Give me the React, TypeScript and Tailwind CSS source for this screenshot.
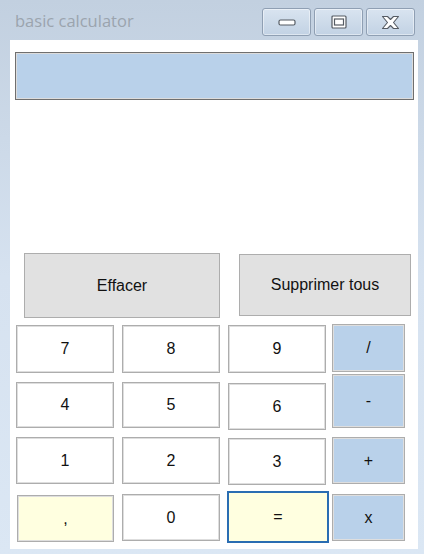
import React from "react";

type Key = { label: string; cls: string };

const base =
  "flex items-center justify-center border border-[#adadad] shadow-[inset_0_0_0_1px_#dedede] text-[16px] text-[#111]";

function CalcButton({ label, cls }: Key) {
  return <div className={`${base} ${cls}`}>{label}</div>;
}

function TitleButton({ children }: { children: React.ReactNode }) {
  return (
    <div className="flex h-[28px] w-[49px] items-center justify-center rounded-[3px] border border-[#8f9fb3] bg-gradient-to-b from-[#d9e4f0] to-[#c2d2e4] shadow-[inset_0_0_0_1px_rgba(255,255,255,0.45)]">
      {children}
    </div>
  );
}

export default function App() {
  return (
    <div
      className="flex h-[554px] w-[424px] flex-col bg-gradient-to-b from-[#c2d0e0] via-[#d6e2f0] to-[#dbe7f4]"
      style={{ fontFamily: '"Liberation Sans", Arial, sans-serif' }}
    >
      {/* Barre de titre */}
      <div className="flex h-[40px] shrink-0 items-start">
        <span
          className="ml-[15px] mt-[9px] text-[16.5px] leading-[24px] text-[#9ba4ae]"
          style={{ fontFamily: '"Open Sans", "Noto Sans", sans-serif' }}
        >
          basic calculator
        </span>
        <div className="ml-auto mr-[9px] mt-[8px] flex gap-[3px]">
          <TitleButton>
            <svg width="18" height="7" viewBox="0 0 18 7">
              <rect x="1" y="1" width="16" height="5" rx="1.5" fill="#fff" stroke="#555b63" strokeWidth="1.2" />
            </svg>
          </TitleButton>
          <TitleButton>
            <svg width="16" height="14" viewBox="0 0 16 14">
              <rect x="1" y="1" width="14" height="12" rx="1" fill="#fff" stroke="#555b63" strokeWidth="1.2" />
              <rect x="3.5" y="4" width="9" height="6" fill="#fff" stroke="#555b63" strokeWidth="1.2" />
            </svg>
          </TitleButton>
          <TitleButton>
            <svg width="19" height="15" viewBox="0 0 19 15">
              <path
                d="M1.5 1.5 L6.5 1.5 L9.5 4.5 L12.5 1.5 L17.5 1.5 L12.5 7.5 L17.5 13.5 L12.5 13.5 L9.5 10.5 L6.5 13.5 L1.5 13.5 L6.5 7.5 Z"
                fill="#fff"
                stroke="#555b63"
                strokeWidth="1.1"
                strokeLinejoin="round"
              />
            </svg>
          </TitleButton>
        </div>
      </div>

      {/* Zone client */}
      <div className="ml-[10px] flex h-[509px] w-[408px] flex-col bg-white">
        {/* Affichage */}
        <div className="ml-[5px] mt-[12px] h-[48px] w-[399px] border border-[#6f6f6f] bg-[#b9d1ea] shadow-[inset_0_0_0_1px_#dcdcdc]" />

        {/* Effacer / Supprimer */}
        <div className="mt-[153px] flex h-[65px] items-start">
          <div className="ml-[14px] flex h-[65px] w-[196px] items-center justify-center border border-[#adadad] bg-[#e1e1e1] text-[16px] text-[#111]">
            Effacer
          </div>
          <div className="ml-[19px] mt-[1px] flex h-[62px] w-[172px] items-center justify-center border border-[#adadad] bg-[#e1e1e1] text-[16px] text-[#111]">
            Supprimer tous
          </div>
        </div>

        {/* Ligne 7 8 9 / */}
        <div className="mt-[6px] flex h-[50px] items-start">
          <CalcButton label="7" cls="ml-[6px] mt-[1px] h-[48px] w-[98px] bg-white" />
          <CalcButton label="8" cls="ml-[8px] mt-[1px] h-[48px] w-[98px] bg-white" />
          <CalcButton label="9" cls="ml-[8px] mt-[1px] h-[48px] w-[98px] bg-white" />
          <CalcButton label="/" cls="ml-[6px] h-[48px] w-[73px] bg-[#b9d1ea]" />
        </div>

        {/* Ligne 4 5 6 - */}
        <div className="flex h-[63px] items-start">
          <CalcButton label="4" cls="ml-[6px] mt-[8px] h-[46px] w-[98px] bg-white" />
          <CalcButton label="5" cls="ml-[8px] mt-[8px] h-[46px] w-[98px] bg-white" />
          <CalcButton label="6" cls="ml-[8px] mt-[9px] h-[47px] w-[98px] bg-white" />
          <CalcButton label="-" cls="ml-[6px] h-[54px] w-[73px] bg-[#b9d1ea]" />
        </div>

        {/* Ligne 1 2 3 + */}
        <div className="flex h-[54px] items-start">
          <CalcButton label="1" cls="ml-[6px] h-[47px] w-[98px] bg-white" />
          <CalcButton label="2" cls="ml-[8px] h-[47px] w-[98px] bg-white" />
          <CalcButton label="3" cls="ml-[8px] mt-[1px] h-[47px] w-[98px] bg-white" />
          <CalcButton label="+" cls="ml-[6px] h-[47px] w-[73px] bg-[#b9d1ea]" />
        </div>

        {/* Ligne , 0 = x */}
        <div className="flex items-start">
          <CalcButton label="," cls="ml-[7px] mt-[4px] h-[47px] w-[97px] bg-[#ffffe0]" />
          <CalcButton label="0" cls="ml-[8px] mt-[3px] h-[47px] w-[98px] bg-white" />
          <div className="ml-[7px] flex h-[52px] w-[102px] items-center justify-center border-2 border-[#2a6db2] bg-[#ffffe0] text-[16px] text-[#111]">
            =
          </div>
          <CalcButton label="x" cls="ml-[3px] mt-[3px] h-[47px] w-[73px] bg-[#b9d1ea]" />
        </div>
      </div>
    </div>
  );
}
